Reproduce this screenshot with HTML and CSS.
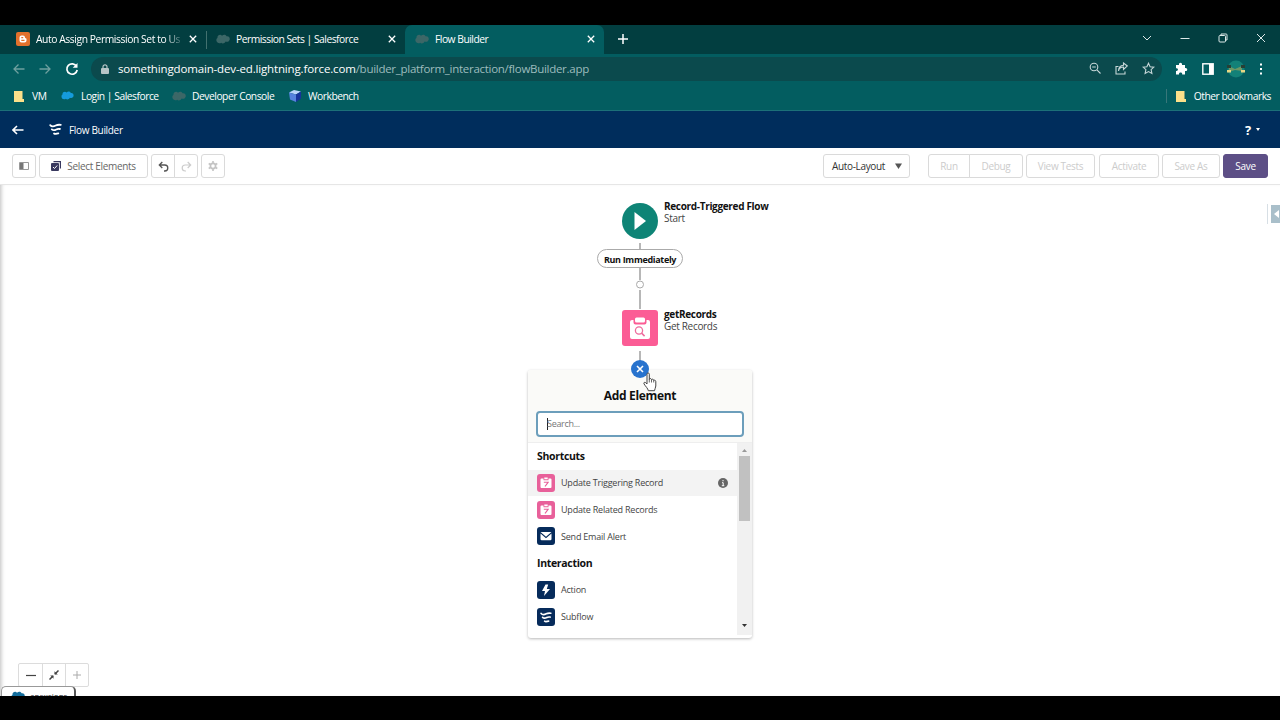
FILE: index.html
```html
<!DOCTYPE html>
<html lang="en">
<head>
    <meta charset="UTF-8">
    <title>Flow Builder</title>
    <link rel="stylesheet" href="styles.css">
</head>
<body>
    <!-- shared shapes -->
    <svg class="defs" width="0" height="0">
        <symbol id="close" viewBox="0 0 10 10"><path d="M1.800 1.800l6.400 6.400M8.200 1.800L1.800 8.200" fill="none" stroke="currentColor" stroke-width="1.300"/></symbol>
        <symbol id="cloud" viewBox="0 0 14 10"><path d="M3.500 9.200C-.3 9.400-.3 4.400 1.500 4 1 1 4.600 0 6 1.700 7.500 0 10.200.5 10.600 2.300 13.500 1.600 14.800 5.300 12.900 7c-.8 1.200-2.400.9-3.200.6C8.600 9.800 6 10 5.200 8.700c-.5.500-1 .5-1.700.5z" fill="currentColor"/></symbol>
        <symbol id="flow" viewBox="0 0 16 16"><path d="M1.500 2.600c2 2.400 4.700 1.600 6.800.5s3.700-1.200 6.200-.8M3.500 7.800c2 1.900 4 .9 5.500.1s2.700-.7 4.500-.5M6.200 12.900c1.500 1.200 3 .2 5.300 0" fill="none" stroke="currentColor" stroke-width="2.200" stroke-linecap="round"/></symbol>
        <symbol id="folder" viewBox="0 0 12 12"><path d="M1 1h8.500v8H11v3H1z" fill="#fbe08a"/></symbol>
        <symbol id="update" viewBox="0 0 18 18"><path d="M4.500 4.500h2v1.700h5V4.500h2a1 1 0 0 1 1 1V13a1 1 0 0 1-1 1h-9a1 1 0 0 1-1-1V5.500a1 1 0 0 1 1-1z" fill="#fff"/><path d="M7.300 3.500h3.400v1.700H7.300z" fill="#fff"/><path d="M6.800 8.300h4.200L8 12.500M11.500 8L8 12.300" fill="none" stroke="#e8609a" stroke-width="1.100"/></symbol>
    </svg>

    <div class="screen">
        <div class="tabs">
            <div class="tab tab-first">
                <svg class="favicon" width="14" height="14" viewBox="0 0 14 14"><rect width="14" height="14" rx="2" fill="#e2712c"/><path d="M3.500 5.500a2 2 0 0 1 2-2H7a2 2 0 0 1 2 2c0 1 1.500.5 1.500 1.500v1.500a2 2 0 0 1-2 2h-3a2 2 0 0 1-2-2z" fill="#fff"/><path d="M5.300 5.600h1.900M5.300 8.400h3.200" stroke="#e2712c" stroke-width="1.100"/></svg>
                <span class="tab-title fade">Auto Assign Permission Set to Us</span>
                <svg class="close" width="10" height="10"><use href="#close"/></svg>
            </div>
            <div class="tab tab-second">
                <svg class="favicon dim" width="14" height="10"><use href="#cloud"/></svg>
                <span class="tab-title">Permission Sets | Salesforce</span>
                <svg class="close" width="10" height="10"><use href="#close"/></svg>
            </div>
            <div class="tab tab-active">
                <svg class="favicon dim" width="14" height="10"><use href="#cloud"/></svg>
                <span class="tab-title">Flow Builder</span>
                <svg class="close" width="10" height="10"><use href="#close"/></svg>
            </div>
            <svg class="new-tab" width="12" height="12" viewBox="0 0 12 12"><path d="M6 1v10M1 6h10" stroke="#fff" stroke-width="1.500"/></svg>
            <div class="window-controls">
                <svg width="10" height="10" viewBox="0 0 10 10"><path d="M1 3l4 4 4-4"/></svg>
                <svg width="10" height="10" viewBox="0 0 10 10"><path d="M.5 5.500h9"/></svg>
                <svg width="10" height="10" viewBox="0 0 10 10"><rect x="1" y="2.500" width="6.500" height="6.500" rx="1"/><path d="M3 2.500V1h5.200Q9 1 9 2v5H7.500"/></svg>
                <svg width="10" height="10" viewBox="0 0 10 10"><path d="M1 1l8 8M9 1L1 9"/></svg>
            </div>
        </div>

        <div class="address-row">
            <div class="nav-icons">
                <svg class="muted" width="12" height="12" viewBox="0 0 12 12"><path d="M11.500 6H1M5.500 1.500L1 6l4.500 4.500"/></svg>
                <svg class="muted" width="12" height="12" viewBox="0 0 12 12"><path d="M.5 6H11M6.500 1.500L11 6l-4.500 4.500"/></svg>
                <svg class="reload" width="14" height="14" viewBox="0 0 14 14"><path d="M11.600 4.400A5.200 5.200 0 1 0 12.200 8"/><path d="M12.500 1v4.800H7.700z" fill="#fff" stroke="none"/></svg>
            </div>
            <div class="omnibox">
                <svg class="lock" width="8" height="10" viewBox="0 0 8 10"><rect y="4" width="8" height="6" rx="1" fill="#b7c5c7"/><path d="M2 4.500V2.800a2 2 0 0 1 4 0v1.700" fill="none" stroke="#b7c5c7" stroke-width="1.200"/></svg>
                <span class="url"><span class="host">somethingdomain-dev-ed.lightning.force.com</span><span class="path">/builder_platform_interaction/flowBuilder.app</span></span>
                <div class="omni-icons">
                    <svg width="12" height="12" viewBox="0 0 12 12"><circle cx="5" cy="5" r="3.800"/><path d="M7.900 7.900L11.500 11.500M3.200 5h3.600"/></svg>
                    <svg width="13" height="13" viewBox="0 0 13 13"><path d="M3.500 4.500H1V12h9V9.500M3.500 9C4 6 6 5 8.500 5V7.500L12.300 4 8.500 1v2.200C5 3.500 3.500 6 3.500 9z"/></svg>
                    <svg width="13" height="13" viewBox="0 0 13 13"><path d="M6.500 1.200l1.600 3.500 3.800.4-2.800 2.600.8 3.800-3.400-1.900-3.400 1.900.8-3.800L1.100 5.100l3.800-.4z"/></svg>
                </div>
            </div>
            <div class="ext-icons">
                <svg width="13" height="13" viewBox="0 0 13 13"><path d="M1 3h3c-.6-3 3.600-3 3 0h3v3c3-.6 3 3.600 0 3v3.500H7.200c.4-2.600-3.600-2.600-3.200 0H1V9c2.600.4 2.600-3 0-2.600z" fill="#fff"/></svg>
                <svg width="12" height="12" viewBox="0 0 12 12"><rect x=".8" y=".8" width="10.400" height="10.400" fill="none" stroke="#fff" stroke-width="1.400"/><path d="M7 1h4v10H7z" fill="#fff"/></svg>
                <svg class="avatar" width="18" height="18" viewBox="0 0 18 18"><circle cx="9" cy="9" r="8.500" fill="#138178"/><path d="M2 6l6 3 7-3v5l-7-1-6 2z" fill="#6d9865"/><path d="M0 5h4v3H0zM14 5h4v3h-4z" fill="#273f35"/><path d="M0 10h4v2.500H0zM14 10h4v2.500h-4z" fill="#e5d684"/></svg>
                <svg width="4" height="12" viewBox="0 0 4 12"><path d="M1 .5h2v2H1zM1 5h2v2H1zM1 9.500h2v2H1z" fill="#fff"/></svg>
            </div>
        </div>

        <div class="bookmarks">
            <span class="bookmark vm"><svg width="12" height="12"><use href="#folder"/></svg>VM</span>
            <span class="bookmark login"><svg class="blue" width="13" height="9"><use href="#cloud"/></svg><span>Login | Salesforce</span></span>
            <span class="bookmark dev"><svg class="dim" width="14" height="10"><use href="#cloud"/></svg><span>Developer Console</span></span>
            <span class="bookmark bench"><svg width="12" height="12" viewBox="0 0 12 12"><path d="M0 2.500L5 0l7 1.500-5 3z" fill="#b9d5fa"/><path d="M0 2.500l7 2V12L1 9.500z" fill="#5582dd"/><path d="M7 4.500l5-3v7L7 12z" fill="#17349b"/></svg><span>Workbench</span></span>
            <span class="bookmark other"><svg width="12" height="12"><use href="#folder"/></svg><span>Other bookmarks</span></span>
        </div>

        <div class="app-header">
            <svg class="back" width="12" height="10" viewBox="0 0 12 10"><path d="M11.500 5H1.500M5 1L1 5l4 4" fill="none" stroke="#fff" stroke-width="1.600"/></svg>
            <svg class="app-icon" width="13" height="13"><use href="#flow"/></svg>
            <span class="app-name">Flow Builder</span>
            <span class="help">?</span>
            <svg class="help-caret" width="4" height="3" viewBox="0 0 4 3"><path d="M0 0h4L2 3z" fill="#fff"/></svg>
        </div>

        <div class="toolbar">
            <div class="btn btn-icon"><svg width="10" height="8" viewBox="0 0 10 8"><path d="M.5.5h9v7h-9z" fill="none" stroke="#999"/><path d="M1 1h3.500v6H1z" fill="#777"/></svg></div>
            <div class="btn btn-select">
                <svg width="10" height="10" viewBox="0 0 10 10"><path d="M2.500.5h7v7" fill="none" stroke="#39395f" stroke-width="1.400"/><rect y="2" width="8" height="8" rx="1" fill="#39395f"/><path d="M2 6l1.500 1.500L6.200 4.500" fill="none" stroke="#fff"/></svg>
                <span>Select Elements</span>
            </div>
            <div class="btn-group undo-group">
                <div class="btn"><svg width="11" height="11" viewBox="0 0 11 11"><path d="M1.500 4h5.300a3 3 0 0 1 0 6H6M4.300 1L1.300 4l3 3" fill="none" stroke="#555" stroke-width="1.300"/></svg></div>
                <div class="btn"><svg width="11" height="11" viewBox="0 0 11 11"><path d="M9.500 4H4.200a3 3 0 0 0 0 6H5M6.700 1l3 3-3 3" fill="none" stroke="#ccc" stroke-width="1.200"/></svg></div>
            </div>
            <div class="btn btn-icon"><svg width="10" height="10" viewBox="0 0 10 10"><circle cx="5" cy="5" r="2.600" fill="none" stroke="#c4c4c4" stroke-width="1.700"/><path d="M5 0v2M5 8v2M.7 2.500l1.700 1M7.600 6.500l1.700 1M.7 7.500l1.700-1M7.600 3.500l1.700-1" stroke="#c4c4c4" stroke-width="1.600"/></svg></div>
            <div class="btn btn-layout"><span>Auto-Layout</span><svg width="7" height="6" viewBox="0 0 7 6"><path d="M0 .5h7L3.500 6z" fill="#555"/></svg></div>
            <div class="btn-group run-group">
                <div class="btn disabled">Run</div>
                <div class="btn disabled">Debug</div>
            </div>
            <div class="btn disabled btn-tests">View Tests</div>
            <div class="btn disabled btn-activate">Activate</div>
            <div class="btn disabled btn-saveas">Save As</div>
            <div class="btn btn-save">Save</div>
        </div>

        <div class="canvas">
            <svg class="connectors" width="20" height="180" viewBox="0 0 20 180"><path d="M10 58v7M10 83v12M10 105v19M10 166v12" stroke="#919191" stroke-width="1.300"/><circle cx="10" cy="99.500" r="3.500" fill="#fff" stroke="#aaa"/></svg>

            <svg class="node start-node" width="36" height="36" viewBox="0 0 36 36"><circle cx="18" cy="18" r="18" fill="#0e8476"/><path d="M12.500 9v18l11.500-9z" fill="#fff"/></svg>
            <div class="label start-label"><b>Record-Triggered Flow</b><span>Start</span></div>

            <div class="pill">Run Immediately</div>

            <svg class="node get-node" width="36" height="36" viewBox="0 0 36 36"><rect width="36" height="36" rx="3" fill="#fb5c95"/><path d="M8 12a2 2 0 0 1 2-2h1.500v2.500a2 2 0 0 0 2 2h9a2 2 0 0 0 2-2V10H26a2 2 0 0 1 2 2v15a2 2 0 0 1-2 2H10a2 2 0 0 1-2-2z" fill="#fff"/><rect x="13" y="7.500" width="10" height="5" rx="1.500" fill="#fff"/><circle cx="17" cy="20.500" r="3.600" fill="none" stroke="#ee6c9d" stroke-width="1.300"/><path d="M19.600 23.100l3 3" stroke="#ee6c9d" stroke-width="1.500"/></svg>
            <div class="label get-label"><b>getRecords</b><span>Get Records</span></div>

            <div class="panel">
                <div class="panel-head">
                    <div class="panel-title">Add Element</div>
                    <div class="search"><i class="text-caret"></i>Search...</div>
                </div>
                <div class="panel-body">
                    <div class="list">
                        <div class="section">Shortcuts</div>
                        <div class="item hovered"><svg class="pink" width="18" height="18"><use href="#update"/></svg><span>Update Triggering Record</span>
                            <svg class="info" width="10" height="10" viewBox="0 0 10 10"><circle cx="5" cy="5" r="5" fill="#666"/><path d="M5 2v1.300M4 4.700h1.200v3M3.800 7.700h2.500" fill="none" stroke="#fff"/></svg></div>
                        <div class="item"><svg class="pink" width="18" height="18"><use href="#update"/></svg><span>Update Related Records</span></div>
                        <div class="item"><svg class="navy" width="18" height="18" viewBox="0 0 18 18"><path d="M3.500 5h11L9 9.800z" fill="#fff"/><path d="M3.500 6.500L9 11.200l5.500-4.700V12a1.200 1.200 0 0 1-1.200 1.200H4.700A1.200 1.200 0 0 1 3.500 12z" fill="#fff"/></svg><span>Send Email Alert</span></div>
                        <div class="section">Interaction</div>
                        <div class="item"><svg class="navy" width="18" height="18" viewBox="0 0 18 18"><path d="M8.500 3.500L5 10h3l-1 5 6-7H9.800l1.400-4.500z" fill="#fff"/></svg><span>Action</span></div>
                        <div class="item"><svg class="navy" width="18" height="18" viewBox="0 0 18 18"><use href="#flow" x="3" y="3.500" width="12" height="12" color="#fff"/></svg><span>Subflow</span></div>
                    </div>
                    <div class="scrollbar">
                        <svg width="5" height="3" viewBox="0 0 5 3"><path d="M0 3h5L2.500 0z" fill="#999"/></svg>
                        <div class="thumb"></div>
                        <svg width="5" height="3" viewBox="0 0 5 3"><path d="M0 0h5L2.500 3z" fill="#333"/></svg>
                    </div>
                </div>
            </div>

            <svg class="close-node" width="18" height="18" viewBox="0 0 18 18"><circle cx="9" cy="9" r="9" fill="#2873ce"/><path d="M6 6l6 6M12 6l-6 6" stroke="#fff" stroke-width="1.600"/></svg>
            <svg class="hand" width="14" height="20" viewBox="0 0 14 20"><path d="M4 12V2.200C4 .5 6.300.5 6.300 2.200V7.500C6.500 6 8.500 6.300 8.500 7.800 9 6.800 10.700 7 10.700 8.500 11.300 7.800 12.800 8.200 12.800 9.600V14c0 2-1.300 3-1.300 4.700H5.300C5 16.500 2.600 14.500 1 11.900.3 10.600 1.800 9.700 2.700 10.700z" fill="#fff" stroke="#444"/><path d="M6.300 7.500v3M8.500 7.800v2.700M10.700 8.500v2" stroke="#444" stroke-width=".8"/></svg>

            <div class="side-handle"><div><svg width="5" height="8" viewBox="0 0 5 8"><path d="M5 0v8L0 4z" fill="#fff"/></svg></div></div>

            <div class="zoom">
                <div><svg width="10" height="10" viewBox="0 0 10 10"><path d="M0 5.500h10" stroke="#444" stroke-width="1.200"/></svg></div>
                <div><svg width="10" height="10" viewBox="0 0 10 10"><path d="M.5 9.500L4 6M6 4L9.500.5" stroke="#444" stroke-width="1.500"/><path d="M1.200 5.500h3.300v3.300zM5.500 1.200v3.300h3.300z" fill="#444"/></svg></div>
                <div><svg width="10" height="10" viewBox="0 0 10 10"><path d="M5 1v8M1 5h8" stroke="#aaa"/></svg></div>
            </div>

            <div class="watermark"><svg width="14" height="10"><use href="#cloud"/></svg><span>apexsions</span></div>
        </div>
    </div>
</body>
</html>
```

FILE: styles.css
```css
* {
    box-sizing: border-box;
}
body {
    margin: 0;
    height: 720px;
    padding: 25px 0 24px;
    background: #000;
    overflow: hidden;
    font-family: "Open Sans", "Noto Sans", sans-serif;
    font-size: 10px;
    letter-spacing: -0.32px;
}
svg {
    display: block;
    flex: none;
}
.defs {
    position: absolute;
}
.screen {
    height: 671px;
    display: flex;
    flex-direction: column;
    overflow: hidden;
    white-space: nowrap;
}

/* browser chrome */
.tabs {
    height: 29px;
    display: flex;
    align-items: center;
    background: #023e40;
    color: #fff;
}
.tab {
    height: 29px;
    display: flex;
    align-items: center;
    padding-bottom: 2px;
    font-size: 10.3px;
    letter-spacing: -0.5px;
}
.tab-first {
    width: 206px;
    padding-left: 16px;
    padding-right: 8px;
}
.tab-second {
    width: 199px;
    height: 18px;
    border-left: 1px solid #42716f;
    padding-left: 9px;
    padding-right: 8px;
}
.tab-active {
    width: 199px;
    padding-left: 10px;
    padding-right: 8px;
    background: #035d60;
    border-radius: 7px 7px 0 0;
}
.tab-title {
    margin-left: 6px;
    flex: 1;
}
.fade {
    letter-spacing: -0.42px;
    -webkit-mask-image: linear-gradient(90deg, #000 85%, transparent 98%);
}
.close {
    color: #fff;
}
.dim {
    color: #3c6767;
}
.blue {
    color: #159bdc;
}
.new-tab {
    margin-left: 13px;
    margin-bottom: 1px;
}
.window-controls {
    margin-left: auto;
    padding: 0 14px 4px 0;
    display: flex;
    gap: 28px;
}
.window-controls svg {
    fill: none;
    stroke: #dce8e8;
}
.address-row {
    height: 29px;
    display: flex;
    align-items: center;
    background: #035d60;
}
.nav-icons {
    width: 91px;
    padding-left: 13px;
    display: flex;
    align-items: center;
    gap: 14px;
    fill: none;
    stroke: #fff;
    stroke-width: 1.3;
}
.nav-icons .reload {
    stroke-width: 1.7;
}
.nav-icons .muted {
    stroke: #6fa09f;
}
.omnibox {
    width: 1071px;
    height: 24px;
    padding: 0 7px 0 10px;
    border-radius: 12px;
    background: #0b4a4d;
    display: flex;
    align-items: center;
}
.url {
    margin-left: 9px;
    font-size: 11.5px;
}
.host {
    color: #fff;
    letter-spacing: -0.15px;
}
.path {
    color: #9dbcbd;
    letter-spacing: -0.28px;
}
.omni-icons {
    margin-left: auto;
    display: flex;
    gap: 14px;
    fill: none;
    stroke: #c7d7d8;
    stroke-width: 1.1;
}
.ext-icons {
    flex: 1;
    padding: 0 17px 0 13px;
    display: flex;
    align-items: center;
    justify-content: space-between;
}
.bookmarks {
    height: 28px;
    display: flex;
    align-items: center;
    padding: 0 9px 2px 13px;
    background: #035d60;
    border-bottom: 1px solid #1c7078;
    color: #fff;
    font-size: 10.3px;
    letter-spacing: -0.48px;
}
.bookmark {
    display: flex;
    align-items: center;
    gap: 7px;
}
.vm {
    width: 48px;
}
.login {
    width: 111px;
}
.dev {
    width: 117px;
}
.dev svg {
    margin-right: -1px;
}
.other {
    margin-left: auto;
    height: 14px;
    padding-left: 8px;
    border-left: 1px solid #37777a;
}

/* flow builder header */
.app-header {
    height: 37px;
    display: flex;
    align-items: center;
    padding: 0 20px 0 12px;
    background: #002d5c;
    color: #fff;
}
.app-icon {
    margin-left: 25px;
}
.app-name {
    margin-left: 7px;
}
.help {
    margin-left: auto;
    font-size: 13px;
    font-weight: 700;
}
.help-caret {
    margin-left: 5px;
}
.toolbar {
    height: 37px;
    padding: 0 12px;
    display: flex;
    align-items: center;
    border-bottom: 1px solid #e6e6e6;
    background: #fff;
}
.btn {
    height: 24px;
    display: flex;
    align-items: center;
    justify-content: center;
    border: 1px solid #dadada;
    border-radius: 3px;
    color: #666;
}
.btn-icon {
    width: 24px;
}
.btn-select {
    width: 109px;
    margin: 0 3px;
    gap: 6px;
}
.btn-group {
    display: flex;
}
.btn-group .btn:first-child {
    border-radius: 3px 0 0 3px;
}
.btn-group .btn:last-child {
    border-radius: 0 3px 3px 0;
    margin-left: -1px;
}
.undo-group {
    margin-right: 3px;
}
.undo-group .btn {
    width: 24px;
}
.btn-layout {
    width: 87px;
    margin-left: auto;
    margin-right: 18px;
    padding-left: 1px;
    gap: 10px;
    color: #333;
}
.disabled {
    color: #ccc;
}
.run-group .btn:first-child {
    width: 42px;
}
.run-group .btn:last-child {
    width: 54px;
}
.btn-tests {
    width: 69px;
    margin-left: 3px;
}
.btn-activate {
    width: 60px;
    margin-left: 4px;
}
.btn-saveas {
    width: 58px;
    margin: 0 3px;
}
.btn-save {
    width: 45px;
    border-color: #5d4f86;
    background: #5d4f86;
    color: #fff;
}

/* canvas, nodes are placed by position */
.canvas {
    position: relative;
    flex: 1;
    background: #fff;
    box-shadow: inset 4px 0 4px -3px #bbb;
    overflow: hidden;
}
.connectors {
    position: absolute;
    left: 630px;
    top: 0;
}
.node {
    position: absolute;
    left: 622px;
}
.start-node {
    top: 18px;
}
.get-node {
    top: 125px;
}
.label {
    position: absolute;
    left: 664px;
    display: flex;
    flex-direction: column;
    line-height: 12px;
    color: #444;
}
.label b {
    color: #111;
}
.start-label {
    top: 15px;
}
.get-label {
    top: 123px;
}
.pill {
    position: absolute;
    left: 597px;
    top: 64px;
    width: 86px;
    height: 19px;
    border: 1px solid #aaa;
    border-radius: 10px;
    background: #fff;
    text-align: center;
    font-size: 9px;
    font-weight: 700;
    line-height: 19px;
    color: #111;
}
.panel {
    position: absolute;
    left: 528px;
    top: 185px;
    width: 224px;
    height: 268px;
    background: #fff;
    border-radius: 3px;
    box-shadow: 0 1px 3px rgba(0,0,0,0.28);
}
.panel-head {
    height: 73px;
    padding: 17px 8px 0;
    background: #fafaf8;
    border-bottom: 1px solid #eee;
    border-radius: 3px 3px 0 0;
}
.panel-title {
    text-align: center;
    font-size: 12px;
    font-weight: 700;
    line-height: 18px;
    color: #111;
}
.search {
    height: 26px;
    margin-top: 6px;
    padding: 0 0 1px 9px;
    display: flex;
    align-items: center;
    border: 2px solid #6c9ebb;
    border-radius: 4px;
    background: #fff;
    font-size: 9px;
    color: #777;
    letter-spacing: -0.3px;
}
.text-caret {
    width: 1px;
    height: 12px;
    margin-right: -1px;
    background: #222;
}
.panel-body {
    display: flex;
}
.list {
    flex: 1;
}
.section {
    height: 26.5px;
    padding-left: 9px;
    font-size: 10.5px;
    font-weight: 700;
    line-height: 27px;
    color: #111;
}
.item {
    height: 26.8px;
    padding: 0 9px;
    display: flex;
    align-items: center;
    gap: 6px;
    font-size: 9px;
    letter-spacing: -0.21px;
    color: #444;
}
.hovered {
    background: #f3f3f3;
}
.info {
    margin-left: auto;
}
.pink {
    border-radius: 3px;
    background: #e8609a;
}
.navy {
    border-radius: 3px;
    background: #062b5b;
}
.scrollbar {
    width: 15px;
    height: 192px;
    padding: 6px 2px 8px;
    display: flex;
    flex-direction: column;
    align-items: center;
    background: #f1f1f1;
}
.thumb {
    width: 11px;
    height: 65px;
    margin: 4px 0 auto;
    background: #c1c1c1;
}
.close-node {
    position: absolute;
    left: 631px;
    top: 175px;
}
.hand {
    position: absolute;
    left: 643px;
    top: 187px;
}
.side-handle {
    position: absolute;
    right: 0;
    top: 19px;
    padding: 1px 0 1px 3px;
    border-left: 1px solid #d7dfe5;
}
.side-handle div {
    width: 9px;
    height: 18px;
    padding: 5px 0 0 3px;
    background: #a9bfca;
}
.zoom {
    position: absolute;
    left: 18px;
    top: 478px;
    height: 24px;
    display: flex;
    border: 1px solid #dcdcdc;
    border-radius: 2px;
}
.zoom div {
    width: 23px;
    display: flex;
    align-items: center;
    justify-content: center;
}
.zoom div + div {
    border-left: 1px solid #dcdcdc;
}
.watermark {
    position: absolute;
    left: 1px;
    top: 501px;
    width: 75px;
    height: 22px;
    padding: 4px 0 0 9px;
    display: flex;
    gap: 5px;
    border: 1px solid #999;
    border-right: 2px solid #555;
    border-radius: 5px;
    background: #fff;
    color: #126c9b;
    line-height: 10px;
}
.watermark span {
    color: #222;
    font-size: 8px;
    letter-spacing: 0;
}
```
